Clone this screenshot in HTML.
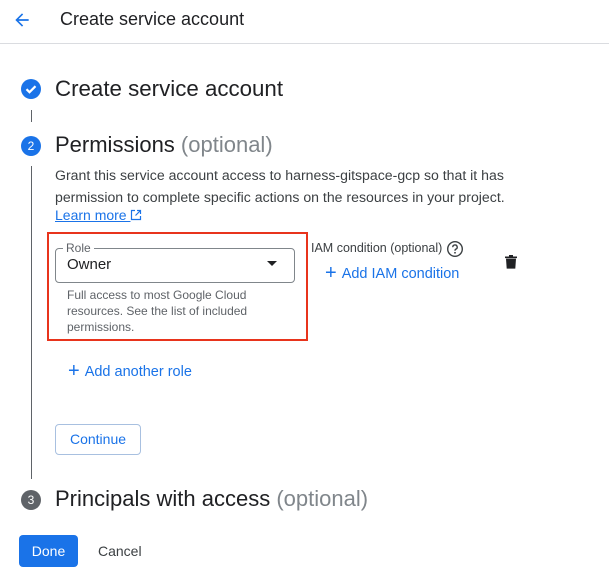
<!DOCTYPE html>
<html><head><style>
*{margin:0;padding:0;box-sizing:border-box}
body{width:609px;height:583px;background:#fff;font-family:"Liberation Sans",Arial,sans-serif;color:#202124;position:relative;overflow:hidden}
.a{position:absolute;white-space:nowrap}
.circ{position:absolute;width:20px;height:20px;border-radius:50%;color:#fff;font-size:12px;text-align:center;line-height:20px}
.vl{position:absolute;left:31px;width:1px;background:#5f6368}
.blue{color:#1a73e8}
</style></head><body>
<div style="position:absolute;left:0;top:43px;width:609px;height:1px;background:#dadce0"></div>
<svg class="a" style="left:12px;top:10px" width="20" height="20" viewBox="0 0 24 24"><path d="M20 11H7.8l5.6-5.6L12 4l-8 8 8 8 1.4-1.4L7.8 13H20z" fill="#1a73e8"/></svg>
<div class="a" style="left:60px;top:9px;font-size:18px">Create service account</div>

<div class="circ" style="left:21px;top:79px;background:#1a73e8"><svg width="20" height="20" viewBox="0 0 20 20"><path d="M5.5 10.2l3 3 6-6" stroke="#fff" stroke-width="2.2" fill="none"/></svg></div>
<div class="a" style="left:55px;top:76px;font-size:22.3px">Create service account</div>
<div class="vl" style="top:110px;height:12px"></div>
<div class="circ" style="left:21px;top:136px;background:#1a73e8">2</div>
<div class="a" style="left:55px;top:132px;font-size:22px">Permissions <span style="color:#80868b">(optional)</span></div>
<div class="vl" style="top:166px;height:313px"></div>
<div class="a" style="left:55px;top:164px;font-size:14.1px;line-height:22px;color:#3c4043">Grant this service account access to harness-gitspace-gcp so that it has<br>permission to complete specific actions on the resources in your project.</div>
<div class="a blue" style="left:55px;top:207px;font-size:14px;text-decoration:underline">Learn more <svg width="12" height="12" viewBox="0 0 12 12" style="vertical-align:-1px"><path d="M5 1.5H1.5v9h9V7M7 1.5h3.5V5M10.5 1.5 5.5 6.5" stroke="#1a73e8" stroke-width="1.2" fill="none"/></svg></div>

<div style="position:absolute;left:47px;top:232px;width:261px;height:109px;border:2px solid #e8341c"></div>
<div style="position:absolute;left:55px;top:248px;width:240px;height:35px;border:1px solid #80868b;border-radius:4px"></div>
<div class="a" style="left:63px;top:241px;font-size:12px;color:#5f6368;background:#fff;padding:0 3px">Role</div>
<div class="a" style="left:67px;top:256px;font-size:15px">Owner</div>
<svg class="a" style="left:267px;top:261px" width="10" height="6"><path d="M0 0h10L5 5z" fill="#202124"/></svg>
<div class="a" style="left:67px;top:287px;font-size:12px;line-height:16px;color:#5f6368">Full access to most Google Cloud<br>resources. See the list of included<br>permissions.</div>

<div class="a" style="left:311px;top:241px;font-size:12.5px;color:#3c4043">IAM condition (optional)</div>
<svg class="a" style="left:446px;top:240px" width="18" height="18" viewBox="0 0 18 18"><circle cx="9" cy="9" r="7.3" stroke="#3c4043" stroke-width="1.4" fill="none"/><path d="M6.8 7.2a2.2 2.2 0 1 1 3 2c-.7.3-.8.7-.8 1.5" stroke="#3c4043" stroke-width="1.4" fill="none"/><circle cx="9" cy="12.8" r=".9" fill="#3c4043"/></svg>
<div class="a blue" style="left:325px;top:261px;font-size:14.5px"><span style="font-size:20px;position:relative;top:1px;margin-right:5px">+</span>Add IAM condition</div>
<svg class="a" style="left:504px;top:254px" width="14" height="16" viewBox="0 0 14 16"><path d="M1 2.5h12v1.6H1zM5 1h4v1.6H5zM2 4.6h10l-.7 10H2.7z" fill="#202124"/></svg>

<div class="a blue" style="left:68px;top:359px;font-size:14.5px"><span style="font-size:20px;position:relative;top:1px;margin-right:5px">+</span>Add another role</div>
<div style="position:absolute;left:55px;top:424px;width:86px;height:31px;border:1px solid #a8c0e0;border-radius:4px;color:#1a73e8;font-size:14px;text-align:center;line-height:29px">Continue</div>

<div class="circ" style="left:21px;top:490px;background:#5f6368">3</div>
<div class="a" style="left:55px;top:486px;font-size:22px">Principals with access <span style="color:#80868b">(optional)</span></div>

<div style="position:absolute;left:19px;top:535px;width:59px;height:32px;background:#1a73e8;border-radius:4px;color:#fff;font-size:14px;text-align:center;line-height:32px">Done</div>
<div class="a" style="left:98px;top:543px;font-size:14px;color:#3c4043">Cancel</div>
</body></html>
